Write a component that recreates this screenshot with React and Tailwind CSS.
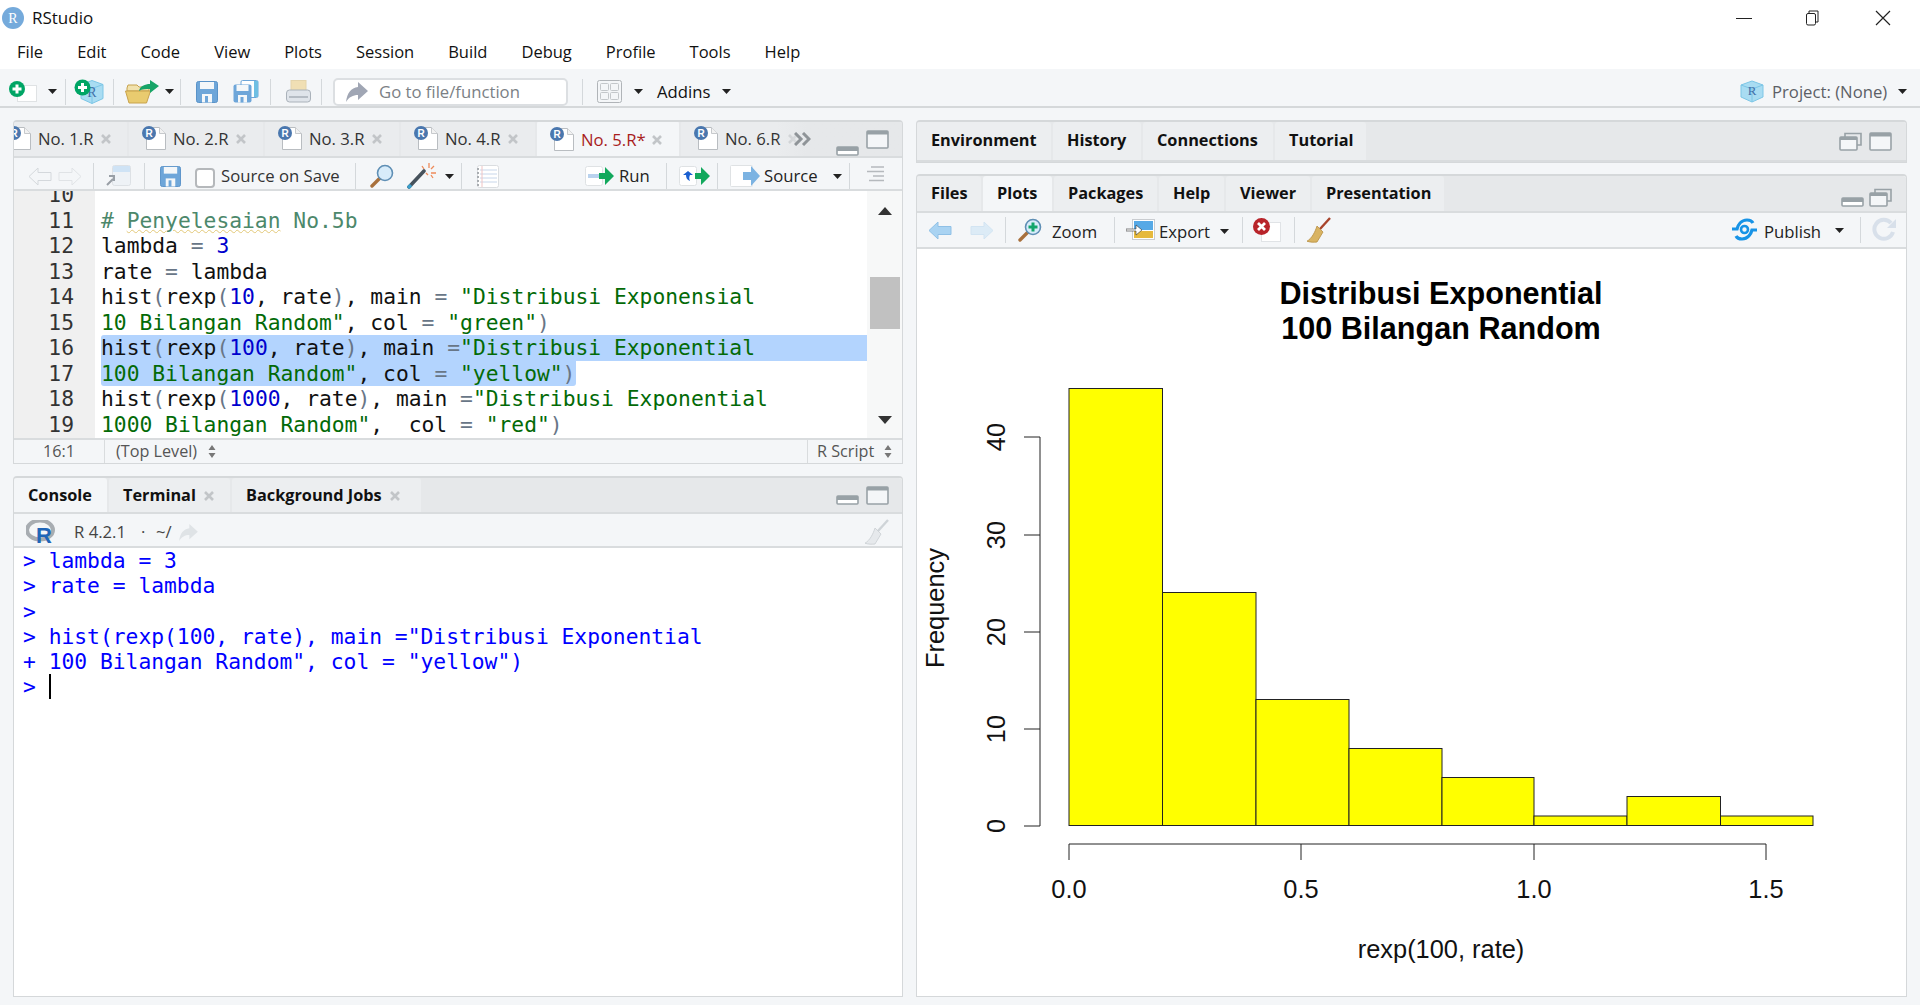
import React from "react";

const UI = "font-['Open_Sans',sans-serif]";
const MONO = "font-['DejaVu_Sans_Mono',monospace]";

// --- small icons ---
const Caret = ({ className = "" }) => (
  <svg width="9" height="5" viewBox="0 0 9 5" className={`shrink-0 ${className}`}><path d="M0 0h9L4.5 5z" fill="#222" /></svg>
);

const Sep = ({ className = "" }) => <div className={`w-px h-[26px] bg-[#d4d8db] shrink-0 ${className}`} />;

const CloseX = ({ className = "" }) => (
  <svg width="12" height="12" viewBox="0 0 12 12" className={`shrink-0 ${className}`}><path d="M2 2l8 8M10 2l-8 8" stroke="#c2c5c8" strokeWidth="2.6" /></svg>
);

const UpDown = ({ className = "" }) => (
  <svg width="8" height="13" viewBox="0 0 8 13" className={`shrink-0 ${className}`}><path d="M4 0l3.5 5h-7zM4 13L.5 8h7z" fill="#777" /></svg>
);

const Page = ({ badge, className = "" }) => (
  <svg width="26" height="25" viewBox="0 0 26 25" className={`shrink-0 ${className}`}>
    <path d="M4.5 1.5h13l6 6v16h-19z" fill="#fff" stroke="#b9bdc1" />
    <path d="M17.5 1.5v6h6" fill="#f2f2f2" stroke="#c6c9cc" />
    {badge && <circle cx="7" cy="7" r="7" fill="#4a77ae" />}
    {badge && <text x="7" y="10.5" fontSize="10" fontWeight="700" fill="#fff" textAnchor="middle" fontFamily="Liberation Sans">R</text>}
  </svg>
);

const Floppy = ({ className = "", size = 22 }) => (
  <svg width={size} height={size} viewBox="0 0 22 22" className={`shrink-0 ${className}`}>
    <rect x="0.5" y="0.5" width="21" height="21" rx="2" fill="#6ea6d9" stroke="#5a93c8" />
    <rect x="4" y="1" width="14" height="7" fill="#f4f7f9" />
    <rect x="6" y="13" width="10" height="8.5" fill="#f4f7f9" />
    <rect x="9" y="15" width="3" height="6.5" fill="#6ea6d9" />
  </svg>
);

const FloppyAll = ({ className = "" }) => (
  <svg width="26" height="23" viewBox="0 0 26 23" className={`shrink-0 ${className}`}>
    <rect x="8" y="0.5" width="17" height="17" rx="1.5" fill="#fff" stroke="#6ea6d9" />
    <rect x="21" y="1" width="4" height="16" fill="#6fbfe3" />
    <rect x="0.5" y="4.5" width="18" height="18" rx="2" fill="#6ea6d9" />
    <rect x="3.5" y="5" width="12" height="6" fill="#f4f7f9" />
    <rect x="5" y="15" width="9" height="7.5" fill="#f4f7f9" />
    <rect x="7.5" y="17" width="3" height="5.5" fill="#6ea6d9" />
  </svg>
);

const Cube = ({ plus, className = "" }) => (
  <svg width="32" height="26" viewBox="0 0 32 26" className={`shrink-0 ${className}`}>
    <path d="M18 1.5l11 4v14l-11 5-11-5v-14z" fill="#a9dcf2" stroke="#7cc6e6" />
    <path d="M7 5.5l11 4 11-4M18 9.5v15" fill="none" stroke="#7cc6e6" />
    <text x="18" y="18" fontSize="14" fill="#3f6fa8" textAnchor="middle" fontFamily="Liberation Serif">R</text>
    {plus && <circle cx="8.5" cy="8.5" r="8" fill="#00a565" />}
    {plus && <path d="M8.5 4v9M4 8.5h9" stroke="#fff" strokeWidth="3" />}
  </svg>
);

const Magnifier = ({ plus, className = "" }) => (
  <svg width="24" height="24" viewBox="0 0 24 24" className={`shrink-0 ${className}`}>
    <path d="M10 14L2 22" stroke="#a8703c" strokeWidth="3.4" strokeLinecap="round" />
    <circle cx="15" cy="9" r="7.5" fill="#d8ecfa" stroke="#5f8fb5" strokeWidth="1.6" />
    {plus && <path d="M15 4.5v9M10.5 9h9" stroke="#12a56b" strokeWidth="3" />}
  </svg>
);

const Broom = ({ faded, className = "" }) => (
  <svg width="28" height="26" viewBox="0 0 28 26" className={`shrink-0 ${className}`}>
    <path d="M24 1L14 12" stroke={faded ? "#cfd4d8" : "#a8442c"} strokeWidth="2.4" />
    <path d="M11 9l6 6-6 10c-3 .4-7 .3-10-.8 5-3 8-9 10-15.200z" fill={faded ? "#e6e9ec" : "#d9b463"} stroke={faded ? "#c9ced2" : "#b88f42"} strokeWidth=".8" />
  </svg>
);

const WinMin = () => (
  <svg width="23" height="10" viewBox="0 0 23 10" className="shrink-0 self-end"><rect x="1" y="1" width="21" height="8" rx="1" fill="#fff" stroke="#98a1a6" strokeWidth="1.6" /><rect x="1" y="1" width="21" height="4" fill="#98a1a6" /></svg>
);
const WinMax = () => (
  <svg width="23" height="19" viewBox="0 0 23 19" className="shrink-0"><rect x="1" y="1" width="21" height="17" rx="1" fill="#f4f6f8" stroke="#98a1a6" strokeWidth="1.6" /><rect x="1" y="1" width="21" height="3.500" fill="#98a1a6" /></svg>
);
const WinRestore = () => (
  <svg width="23" height="19" viewBox="0 0 23 19" className="shrink-0"><path d="M6 5V1.500h16V13h-4" fill="none" stroke="#98a1a6" strokeWidth="1.6" /><rect x="1" y="5" width="17" height="13" rx="1" fill="#f4f6f8" stroke="#98a1a6" strokeWidth="1.6" /><rect x="1" y="5" width="17" height="3" fill="#98a1a6" /></svg>
);

const ShareArrow = ({ color = "#9aa1b0", w = 22, h = 20, className = "" }) => (
  <svg width={w} height={h} viewBox="0 0 22 20" className={`shrink-0 ${className}`}><path d="M12 0l10 9-10 9v-5C7 13 3 15 0 20 1 11 5 6 12 5z" fill={color} /></svg>
);

const ArrowLeft = ({ fill, stroke, className = "" }) => (
  <svg width="24" height="19" viewBox="0 0 24 19" className={`shrink-0 ${className}`}><path d="M1 9.500L10 1v4.500h13v8H10V18z" fill={fill} stroke={stroke} strokeLinejoin="round" /></svg>
);
const ArrowRight = ({ fill, stroke, className = "" }) => (
  <svg width="24" height="19" viewBox="0 0 24 19" className={`shrink-0 ${className}`}><path d="M23 9.500L14 1v4.500H1v8h13V18z" fill={fill} stroke={stroke} strokeLinejoin="round" /></svg>
);

// --- tabs ---
function SourceTab({ name, active, widthClass }) {
  return (
    <div className={`relative flex items-center h-[35px] shrink-0 rounded-t-[3px] pt-[1px] ${widthClass} ${active ? "bg-[#f4f6f8] h-[37px] -mb-[2px]" : "bg-[#eaecee]"}`}>
      <Page badge className="ml-[13px] -mt-[2px]" />
      <span className={`ml-[5px] whitespace-nowrap text-[16.700px] ${active ? "w-[70px] text-[#a81c1c]" : "w-[62px] text-[#333]"}`}>{name}</span>
      <CloseX />
    </div>
  );
}

function BoldTab({ name, active, widthClass, close }) {
  return (
    <div className={`flex items-center justify-start h-full shrink-0 rounded-t-[3px] pl-[14px] ${widthClass} ${active ? "bg-[#f4f6f8] h-[calc(100%+2px)] -mb-[2px] self-start" : "bg-[#eceef0]"}`}>
      <span className="whitespace-nowrap text-[16.300px] font-bold text-[#111]">{name}</span>
      {close && <CloseX className="ml-[7px]" />}
    </div>
  );
}

// --- code text ---
const S = ({ children }) => <span className="text-[#036a07]">{children}</span>;
const N = ({ children }) => <span className="text-[#0000cd]">{children}</span>;
const O = ({ children }) => <span className="text-[#687687]">{children}</span>;

const codeLines = [
  { n: 10, c: "" },
  { n: 11, c: <span className="text-[#4c886b]"># <span className="underline decoration-wavy decoration-[#e2c878] decoration-1">Penyelesaian</span> No.5b</span> },
  { n: 12, c: <>lambda <O>=</O> <N>3</N></> },
  { n: 13, c: <>rate <O>=</O> lambda</> },
  { n: 14, c: <>hist<O>(</O>rexp<O>(</O><N>10</N>, rate<O>)</O>, main <O>=</O> <S>"Distribusi Exponensial</S></> },
  { n: 15, c: <><S>10 Bilangan Random"</S>, col <O>=</O> <S>"green"</S><O>)</O></> },
  { n: 16, c: <>hist<O>(</O>rexp<O>(</O><N>100</N>, rate<O>)</O>, main <O>=</O><S>"Distribusi Exponential</S></>, sel: "w-full rounded-tl-[3px]" },
  { n: 17, c: <><S>100 Bilangan Random"</S>, col <O>=</O> <S>"yellow"</S><O>)</O></>, sel: "w-[475px] rounded-b-[3px]" },
  { n: 18, c: <>hist<O>(</O>rexp<O>(</O><N>1000</N>, rate<O>)</O>, main <O>=</O><S>"Distribusi Exponential</S></> },
  { n: 19, c: <><S>1000 Bilangan Random"</S>,  col <O>=</O> <S>"red"</S><O>)</O></> },
];

const consoleLines = [
  ["> ", "lambda = 3"],
  ["> ", "rate = lambda"],
  [">", ""],
  ["> ", 'hist(rexp(100, rate), main ="Distribusi Exponential'],
  ["+ ", '100 Bilangan Random", col = "yellow")'],
];

// --- histogram ---
const bars = [
  [1069, 1162.500, 388],
  [1162.500, 1256, 592],
  [1256, 1349, 699],
  [1349, 1442, 748],
  [1442, 1534, 777],
  [1534, 1627, 815.500],
  [1627, 1720.500, 796],
  [1720.500, 1813, 815.500],
];
const yTicks = [[825, "0"], [728, "10"], [631, "20"], [534, "30"], [436, "40"]];
const xTicks = [[1069, "0.0"], [1301, "0.5"], [1534, "1.0"], [1766, "1.5"]];

function Histogram() {
  return (
    <svg width="989" height="748" viewBox="917 248 989 748" className="block" fontFamily="Liberation Sans">
      {bars.map(([x1, x2, y], i) => (
        <rect key={i} x={x1} y={y - 0.5} width={x2 - x1} height={825 - y} fill="#ffff00" stroke="#222" strokeWidth="1" />
      ))}
      <path d="M1040 436V825" stroke="#222" fill="none" />
      {yTicks.map(([y, t]) => (
        <g key={t}>
          <path d={`M1024 ${y}H1040`} stroke="#222" />
          <text transform={`translate(1005 ${y}) rotate(-90)`} fontSize="25.400" textAnchor="middle" fill="#111">{t}</text>
        </g>
      ))}
      <path d="M1069 843H1766" stroke="#222" fill="none" />
      {xTicks.map(([x, t]) => (
        <g key={t}>
          <path d={`M${x} 843V859`} stroke="#222" />
          <text x={x} y="897" fontSize="25.400" textAnchor="middle" fill="#111">{t}</text>
        </g>
      ))}
      <text x="1441" y="957" fontSize="25.400" textAnchor="middle" fill="#111">rexp(100, rate)</text>
      <text transform="translate(944 607) rotate(-90)" fontSize="25.400" textAnchor="middle" fill="#111">Frequency</text>
      <text x="1441" y="303" fontSize="30.600" fontWeight="700" textAnchor="middle" fill="#000">Distribusi Exponential</text>
      <text x="1441" y="338" fontSize="30.600" fontWeight="700" textAnchor="middle" fill="#000">100 Bilangan Random</text>
    </svg>
  );
}

export default function App() {
  return (
    <div className={`h-screen w-full flex flex-col overflow-hidden bg-[#f4f6f8] ${UI} text-[16.700px] text-[#222]`}>
      {/* title bar */}
      <div className="h-[35px] bg-white flex items-center shrink-0 pt-[1px]">
        <svg width="22" height="22" viewBox="0 0 22 22" className="ml-[2px] shrink-0">
          <circle cx="11" cy="11" r="11" fill="#75aadb" />
          <text x="11" y="16" fontSize="14" fill="#fff" textAnchor="middle" fontFamily="Liberation Serif">R</text>
        </svg>
        <span className="ml-[8px] text-[17px] text-[#111]">RStudio</span>
        <div className="ml-auto flex items-center">
          <div className="w-[16px] h-px bg-[#222]" />
          <svg width="15" height="16" viewBox="0 0 15 16" className="ml-[53px]"><path d="M4 3V1h9v11h-2" fill="none" stroke="#222" /><rect x="1.500" y="3.500" width="9" height="11.500" rx="1.500" fill="none" stroke="#222" /></svg>
          <svg width="16" height="16" viewBox="0 0 16 16" className="ml-[55px] mr-[29px]"><path d="M1 1l14 14M15 1L1 15" stroke="#222" strokeWidth="1.200" /></svg>
        </div>
      </div>

      {/* menu */}
      <div className="h-[34px] bg-white flex items-center shrink-0 pl-[17px] gap-[34px] text-[16.500px] text-[#111]">
        {["File", "Edit", "Code", "View", "Plots", "Session", "Build", "Debug", "Profile", "Tools", "Help"].map((m) => (
          <span key={m}>{m}</span>
        ))}
      </div>

      {/* main toolbar */}
      <div className="h-[39px] flex items-center shrink-0 border-b-[2px] border-[#d5d8da] pl-[9px] pt-[8px]">
        <svg width="29" height="21" viewBox="0 0 29 21" className="shrink-0">
          <rect x="8.500" y="4.500" width="19" height="16" fill="#fff" stroke="#dfe2e4" />
          <circle cx="8" cy="8" r="8" fill="#00a565" />
          <path d="M8 3.500v9M3.500 8h9" stroke="#fff" strokeWidth="3" />
        </svg>
        <Caret className="ml-[10px]" />
        <Sep className="ml-[8px]" />
        <Cube plus className="ml-[8px]" />
        <Sep className="ml-[7px]" />
        <svg width="35" height="24" viewBox="0 0 35 24" className="ml-[11px] shrink-0">
          <path d="M2 8l1-3h9l2 2h10v4H2z" fill="#f1e2ae" stroke="#c7a24d" />
          <path d="M0.500 11h25l-4 12H4z" fill="#e9cb6f" stroke="#c7a24d" />
          <path d="M14 11c1-5 6-7 11-7V0l9 6-9 7V9c-4 0-8 0-11 2z" fill="#17a468" />
        </svg>
        <Caret className="ml-[5px]" />
        <Sep className="ml-[6px]" />
        <Floppy className="ml-[15px]" />
        <FloppyAll className="ml-[15px]" />
        <Sep className="ml-[11px]" />
        <svg width="25" height="23" viewBox="0 0 25 23" className="ml-[15px] shrink-0">
          <rect x="5" y="0.500" width="15" height="13" fill="#f0dfb4" stroke="#e4d4ab" />
          <rect x="0.500" y="10" width="24" height="12" rx="3" fill="#dfe4ea" stroke="#aab2ba" />
          <rect x="3" y="16" width="19" height="2" fill="#b5bcc4" />
        </svg>
        <Sep className="ml-[10px]" />
        <div className="ml-[11px] w-[235px] h-[28px] bg-white border-[2px] border-[#dcdfe2] rounded-[5px] flex items-center shrink-0 pl-[11px]">
          <ShareArrow color="#a0a6b4" className="shrink-0" />
          <span className="ml-[11px] text-[#7b7f85] whitespace-nowrap">Go to file/function</span>
        </div>
        <Sep className="ml-[14px]" />
        <svg width="25" height="23" viewBox="0 0 25 23" className="ml-[14px] shrink-0">
          <rect x="0.500" y="0.500" width="24" height="22" rx="2" fill="#f4f6f8" stroke="#b0b4b8" />
          <rect x="3.500" y="3.500" width="8" height="7" rx="1" fill="none" stroke="#c3c7ca" />
          <rect x="13.500" y="3.500" width="8" height="7" rx="1" fill="none" stroke="#c3c7ca" />
          <rect x="3.500" y="12.500" width="8" height="7" rx="1" fill="none" stroke="#c3c7ca" />
          <rect x="13.500" y="12.500" width="8" height="7" rx="1" fill="none" stroke="#c3c7ca" />
        </svg>
        <Caret className="ml-[12px]" />
        <span className="ml-[14px] w-[65px] text-[#111]">Addins</span>
        <Caret />
        <div className="ml-auto flex items-center pr-[13px]">
          <svg width="24" height="23" viewBox="0 0 24 23" className="shrink-0">
            <path d="M12 1l11 4v12l-11 5-11-5V5z" fill="#a9dcf2" stroke="#7cc6e6" />
            <path d="M1 5l11 4 11-4M12 9v13" fill="none" stroke="#7cc6e6" />
            <text x="12" y="15" fontSize="13" fill="#3f6fa8" textAnchor="middle" fontFamily="Liberation Serif">R</text>
          </svg>
          <span className="ml-[8px] w-[126px] whitespace-nowrap text-[#5c6066]">Project: (None)</span>
          <Caret />
        </div>
      </div>

      {/* panes */}
      <div className="flex-1 min-h-0 flex pt-[12px] pb-[8px] pl-[13px] pr-[13px] gap-[13px]">
        {/* left column */}
        <div className="w-[890px] shrink-0 flex flex-col gap-[12px]">
          {/* source pane */}
          <div className="h-[344px] shrink-0 flex flex-col border border-[#d5d8da] border-t-[2px] rounded-t-[4px] overflow-hidden bg-white">
            <div className="relative h-[36px] shrink-0 bg-[#e6e8ea] flex items-end gap-[2px] border-b-[2px] border-[#d9dcde] overflow-hidden">
              <SourceTab name="No. 1.R" widthClass="w-[133px] -ml-[20px]" />
              <SourceTab name="No. 2.R" widthClass="w-[134px]" />
              <SourceTab name="No. 3.R" widthClass="w-[134px]" />
              <SourceTab name="No. 4.R" widthClass="w-[134px]" />
              <SourceTab name="No. 5.R*" active widthClass="w-[142px]" />
              <SourceTab name="No. 6.R" widthClass="w-[134px]" />
              <div className="absolute right-0 top-0 bottom-0 w-[125px] bg-gradient-to-r from-transparent to-[#e6e8ea] to-[24%] flex items-center justify-end gap-[7px] pr-[13px]">
                <svg width="17" height="14" viewBox="0 0 17 14" className="mr-[18px] shrink-0"><path d="M1 1l6 6-6 6M9 1l6 6-6 6" fill="none" stroke="#8f9498" strokeWidth="3" /></svg>
                <WinMin />
                <WinMax />
              </div>
            </div>
            <div className="h-[33px] shrink-0 bg-[#f4f6f8] flex items-center border-b-[2px] border-[#d9dcde] pl-[14px] pt-[5px]">
              <ArrowLeft fill="#f4f6f8" stroke="#d4d8dc" />
              <ArrowRight fill="#f4f6f8" stroke="#e0e3e6" className="ml-[6px]" />
              <Sep className="ml-[11px]" />
              <svg width="25" height="22" viewBox="0 0 25 22" className="ml-[12px] shrink-0">
                <rect x="6.500" y="0.500" width="18" height="20" rx="2" fill="#eef2f6" stroke="#dde1e5" />
                <rect x="7" y="1" width="17" height="6" fill="#cfe3f5" />
                <path d="M1 20l6-6M3 11h5v5" fill="none" stroke="#999fa6" strokeWidth="2" />
              </svg>
              <Sep className="ml-[13px]" />
              <Floppy className="ml-[15px]" size={21} />
              <div className="ml-[14px] w-[20px] h-[20px] mt-[3px] bg-white border-[2px] border-[#b5b8bb] rounded-[4px] shrink-0" />
              <span className="ml-[6px] w-[134px] whitespace-nowrap text-[#333]">Source on Save</span>
              <Sep />
              <Magnifier className="ml-[14px]" />
              <svg width="29" height="26" viewBox="0 0 29 26" className="ml-[13px] shrink-0">
                <path d="M2 24L17 8" stroke="#46525c" strokeWidth="3.600" strokeLinecap="round" />
                <path d="M1 25l3-3" stroke="#3b9ecb" strokeWidth="3.600" />
                <path d="M22 0v5M27 3l-3 3M29 10h-5M26 15l-2-3M15 3l2 3M21 12l-2-2" stroke="#ee8b5a" strokeWidth="1.300" />
              </svg>
              <Caret className="ml-[9px]" />
              <Sep className="ml-[7px]" />
              <svg width="22" height="23" viewBox="0 0 22 23" className="ml-[15px] shrink-0">
                <rect x="0.500" y="0.500" width="21" height="22" rx="2" fill="#fff" stroke="#dadde0" />
                <path d="M3 5h17M3 9h17M3 13h17M3 17h17" stroke="#c7d6ea" />
                <path d="M5 1v21" stroke="#f0c4c4" />
                <path d="M1 3v18" stroke="#a9adb1" strokeWidth="2" strokeDasharray="2 2" />
              </svg>
              <svg width="29" height="20" viewBox="0 0 29 20" className="ml-[86px] shrink-0">
                <rect x="0.500" y="0.500" width="17" height="19" rx="2" fill="#fff" stroke="#dfe2e4" />
                <rect x="3" y="8" width="11" height="4" fill="#b9d2ee" />
                <path d="M14 7h6V1l9 9-9 9v-6h-6z" fill="#12a85c" />
              </svg>
              <span className="ml-[5px] w-[44px] text-[#222]">Run</span>
              <Sep className="ml-[3px]" />
              <svg width="31" height="20" viewBox="0 0 31 20" className="ml-[12px] shrink-0">
                <rect x="0.500" y="0.500" width="17" height="19" rx="2" fill="#fff" stroke="#dfe2e4" />
                <path d="M9 5L4 9h3c0 3 1 5 4 6-1-2-1-4 0-6h3z" fill="#1a5fd0" />
                <path d="M16 7h6V1l9 9-9 9v-6h-6z" fill="#12a85c" />
              </svg>
              <Sep className="ml-[7px]" />
              <svg width="30" height="22" viewBox="0 0 30 22" className="ml-[12px] shrink-0">
                <rect x="0.500" y="0.500" width="22" height="21" rx="1" fill="#fff" stroke="#dfe2e4" />
                <path d="M13 7h8V1l9 10-9 10v-6h-8z" fill="#7cb3e2" />
              </svg>
              <span className="ml-[4px] w-[69px] text-[#222]">Source</span>
              <Caret />
              <Sep className="ml-[7px]" />
              <svg width="18" height="16" viewBox="0 0 18 16" className="ml-[17px] shrink-0 -mt-[5px]"><path d="M4 1h13M0 5.500h17M6 10h11M2 14.500h15" stroke="#b5b9bd" strokeWidth="1.400" /></svg>
            </div>
            <div className={`flex-1 min-h-0 flex overflow-hidden ${MONO} text-[21.300px] leading-[25.550px] text-[#111]`}>
              <div className="w-[81px] shrink-0 bg-[#f0f0f0] text-right pr-[21px] text-[#333] -mt-[9px]">
                {codeLines.map((l) => <div key={l.n} className="h-[25.550px]">{l.n}</div>)}
              </div>
              <div className="flex-1 min-w-0 pl-[6px] -mt-[9px] whitespace-pre">
                {codeLines.map((l) => (
                  <div key={l.n} className="relative h-[25.550px]">
                    {l.sel && <div className={`absolute left-[6px] top-0 bottom-0 -ml-[6px] bg-[#b3d4fe] ${l.sel}`} />}
                    <div className="relative">{l.c}</div>
                  </div>
                ))}
              </div>
              <div className="w-[35px] shrink-0 bg-[#f7f8f8] flex flex-col items-center">
                <svg width="14" height="8" viewBox="0 0 14 8" className="mt-[16px] shrink-0"><path d="M7 0l7 8H0z" fill="#333" /></svg>
                <div className="w-[30px] h-[52px] bg-[#c1c1c1] mt-[62px] shrink-0" />
                <svg width="14" height="8" viewBox="0 0 14 8" className="mt-[87px] shrink-0"><path d="M7 8l7-8H0z" fill="#333" /></svg>
              </div>
            </div>
            <div className="h-[25px] shrink-0 bg-[#f4f6f8] border-t-[2px] border-[#d9dcde] flex items-center text-[16.200px] text-[#555]">
              <div className="w-[90px] text-center shrink-0">16:1</div>
              <div className="w-px h-full bg-[#d9dcde] shrink-0" />
              <span className="ml-[11px] w-[92px] whitespace-nowrap">(Top Level)</span>
              <UpDown />
              <div className="ml-auto w-px h-full bg-[#d9dcde] shrink-0" />
              <span className="ml-[9px] w-[67px] whitespace-nowrap">R Script</span>
              <UpDown className="mr-[10px]" />
            </div>
          </div>

          {/* console pane */}
          <div className="flex-1 min-h-0 flex flex-col border border-[#d5d8da] border-t-[2px] rounded-t-[4px] overflow-hidden bg-white">
            <div className="h-[36px] shrink-0 bg-[#e6e8ea] flex items-end gap-[2px] border-b-[2px] border-[#d9dcde]">
              <BoldTab name="Console" active widthClass="w-[93px] pt-[1px]" />
              <BoldTab name="Terminal" close widthClass="w-[121px] pt-[1px]" />
              <BoldTab name="Background Jobs" close widthClass="w-[189px] pt-[1px]" />
              <div className="ml-auto self-center flex items-center gap-[7px] pr-[13px] h-[19px]">
                <WinMin />
                <WinMax />
              </div>
            </div>
            <div className="h-[34px] shrink-0 bg-[#f4f6f8] border-b-[2px] border-[#d9dcde] flex items-center pl-[12px] pt-[4px]">
              <svg width="29" height="24" viewBox="0 0 29 24" className="shrink-0">
                <ellipse cx="14" cy="10" rx="13" ry="9.500" fill="none" stroke="#a8adb2" strokeWidth="4" />
                <text x="18" y="23" fontSize="22" fontWeight="700" fill="#1f65b7" textAnchor="middle" fontFamily="Liberation Sans">R</text>
              </svg>
              <span className="ml-[19px] w-[67px] whitespace-nowrap text-[#444]">R 4.2.1</span>
              <span className="w-[15px] text-[#444]">·</span>
              <span className="text-[#444]">~/</span>
              <ShareArrow color="#dfe3e6" w={19} h={17} className="ml-[7px]" />
              <Broom faded className="ml-auto mr-[10px]" />
            </div>
            <div className={`flex-1 min-h-0 pl-[9px] ${MONO} text-[21.300px] leading-[25.250px] text-[#0000ff] whitespace-pre`}>
              {consoleLines.map(([p, t], i) => <div key={i} className="h-[25.250px]">{p}{t}</div>)}
              <div className="flex items-center h-[25.250px]">
                <span>{"> "}</span>
                <span className="w-[2px] h-[25px] bg-black" />
              </div>
            </div>
          </div>
        </div>

        {/* right column */}
        <div className="flex-1 min-w-0 flex flex-col gap-[11px]">
          <div className="h-[43px] shrink-0 flex flex-col border border-[#d5d8da] border-t-[2px] rounded-t-[4px] overflow-hidden bg-[#e6e8ea]">
            <div className="h-full bg-[#e6e8ea] flex items-stretch gap-[2px] border-b-[2px] border-[#d9dcde]">
              <BoldTab name="Environment" widthClass="w-[134px] pb-[2px]" />
              <BoldTab name="History" widthClass="w-[88px] pb-[2px]" />
              <BoldTab name="Connections" widthClass="w-[130px] pb-[2px]" />
              <BoldTab name="Tutorial" widthClass="w-[91px] pb-[2px]" />
              <div className="ml-auto self-center flex items-center gap-[7px] pr-[14px]">
                <WinRestore />
                <WinMax />
              </div>
            </div>
          </div>
          <div className="flex-1 min-h-0 flex flex-col border border-[#d5d8da] border-t-[2px] rounded-t-[4px] overflow-hidden bg-white">
            <div className="h-[37px] shrink-0 bg-[#e6e8ea] flex items-end gap-[2px] border-b-[2px] border-[#d9dcde]">
              <BoldTab name="Files" widthClass="w-[64px]" />
              <BoldTab name="Plots" active widthClass="w-[69px]" />
              <BoldTab name="Packages" widthClass="w-[103px]" />
              <BoldTab name="Help" widthClass="w-[65px]" />
              <BoldTab name="Viewer" widthClass="w-[84px]" />
              <BoldTab name="Presentation" widthClass="w-[132px]" />
              <div className="ml-auto self-end flex items-end gap-[5px] pr-[14px] pb-[4px] h-[23px]">
                <WinMin />
                <WinRestore />
              </div>
            </div>
            <div className="h-[36px] shrink-0 bg-[#f4f6f8] border-b-[2px] border-[#d9dcde] flex items-center pl-[11px] text-[#222]">
              <ArrowLeft fill="#a9d3f2" stroke="#8fc0e6" />
              <ArrowRight fill="#dcebf6" stroke="#d2e4f2" className="ml-[18px]" />
              <Sep className="ml-[11px]" />
              <Magnifier plus className="ml-[12px]" />
              <span className="ml-[10px] w-[62px] mt-[3px]">Zoom</span>
              <Sep />
              <svg width="29" height="23" viewBox="0 0 29 23" className="ml-[11px] shrink-0">
                <rect x="6.500" y="0.500" width="22" height="20" fill="#fff" stroke="#c9ccd0" />
                <rect x="8" y="2" width="19" height="9" fill="#56a9e6" />
                <path d="M8 12h19v7H8z" fill="#e6b93d" />
                <path d="M0 10h10V6l6 5-6 5v-4H0z" fill="#fff" stroke="#333" strokeWidth=".600" />
              </svg>
              <span className="ml-[4px] w-[61px] mt-[3px]">Export</span>
              <Caret className="mt-[2px]" />
              <Sep className="ml-[13px]" />
              <svg width="29" height="25" viewBox="0 0 29 25" className="ml-[10px] shrink-0">
                <rect x="8.500" y="4.500" width="19" height="19" fill="#fff" stroke="#e0e3e6" />
                <circle cx="8.500" cy="8.500" r="8.500" fill="#b8242a" />
                <path d="M5 5l7 7M12 5l-7 7" stroke="#fff" strokeWidth="2.800" />
              </svg>
              <Sep className="ml-[12px]" />
              <Broom className="ml-[11px]" />
              <div className="ml-auto flex items-center pr-[9px]">
                <svg width="27" height="23" viewBox="0 0 27 23" className="shrink-0">
                  <path d="M1 11h5c1-4 4-9 10-9 3 0 5 1 6 3M26 12h-5c-1 4-4 9-10 9-3 0-5-1-6-3" fill="none" stroke="#1793e6" strokeWidth="3.200" />
                  <circle cx="13.500" cy="11.500" r="3.500" fill="none" stroke="#1793e6" strokeWidth="2.600" />
                </svg>
                <span className="ml-[6px] w-[71px] mt-[3px]">Publish</span>
                <Caret className="mt-[2px]" />
                <Sep className="ml-[16px]" />
                <svg width="25" height="25" viewBox="0 0 25 25" className="ml-[11px] shrink-0">
                  <path d="M19 6a9.500 9.500 0 1 0 2 9" fill="none" stroke="#d8e0ea" strokeWidth="4" />
                  <path d="M24 2v9h-9z" fill="#d8e0ea" />
                </svg>
              </div>
            </div>
            <div className="flex-1 min-h-0 overflow-hidden">
              <Histogram />
            </div>
          </div>
        </div>
      </div>
    </div>
  );
}
